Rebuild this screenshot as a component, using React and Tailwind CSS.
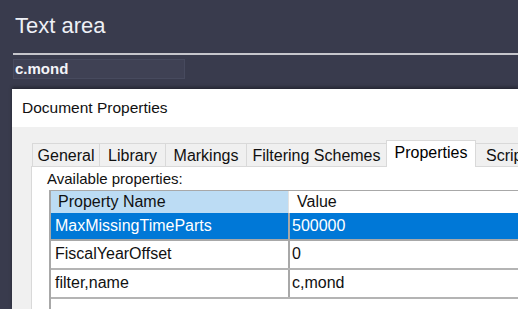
import React from "react";

const tabs = [
  { t: "General", w: "w-[67px]" },
  { t: "Library", w: "w-[66px]" },
  { t: "Markings", w: "w-[81px]" },
  { t: "Filtering Schemes", w: "w-[140px]" },
  { t: "Properties", w: "w-[90px]", sel: true },
  { t: "Scripts", w: "w-[70px]" },
];

const rows = [
  { name: "MaxMissingTimeParts", value: "500000", selected: true, h: "h-[28px]" },
  { name: "FiscalYearOffset", value: "0", h: "h-[29px]" },
  { name: "filter,name", value: "c,mond", h: "h-[29px]" },
];

export default function App() {
  return (
    <div className="flex flex-col w-[518px] h-[309px] overflow-hidden bg-[#393b4d] font-['Liberation_Sans',Arial,sans-serif]">
      <div className="pl-[15px] pt-[13px] text-[22px] leading-[26px] text-[#eef0f6]">Text area</div>
      <div className="ml-[13px] mt-[14px] h-[2px] bg-[#c6c6cc]" />
      <div className="ml-[13px] mt-[4px] w-[172px] h-[20px] bg-[#3f4154] border border-[#474a5e] pl-[1px] text-[15px] leading-[18px] font-semibold text-[#f4f4f8]">
        c.mond
      </div>
      <div className="ml-[12px] mt-[10px] flex-1 flex flex-col bg-white shadow-[0_-2px_3px_rgba(0,0,0,0.35)]">
        <div className="h-[38px] pl-[10px] text-[15.5px] leading-[38px] text-[#111]">Document Properties</div>
        <div className="flex-1 flex flex-col bg-[#f0f0f0] pt-[14px] pl-[19px]">
          <div className="relative z-10 ml-[1px] flex items-end h-[25px]">
            {tabs.map(({ t, w, sel }, i) => {
              if (sel) {
                return (
                  <div
                    key={t}
                    className={
                      w +
                      " shrink-0 -mb-[1px] h-[27px] flex justify-center bg-white border border-b-0 border-[#d9d9d9] text-[16px] leading-[23px] text-black whitespace-nowrap"
                    }
                  >
                    {t}
                  </div>
                );
              }
              return (
                <div
                  key={t}
                  className={
                    w +
                    " shrink-0 h-[23px] flex justify-center pt-[1px] bg-[#f0f0f0] border-t border-l border-[#d9d9d9] text-[16px] leading-[22px] text-[#111] whitespace-nowrap overflow-hidden" +
                    (i === tabs.length - 1 ? " border-r border-l-0" : "")
                  }
                >
                  {t}
                </div>
              );
            })}
          </div>
          <div className="flex-1 flex flex-col bg-white border-t border-l border-[#d9d9d9] pl-[15px] pt-[3px]">
            <div className="text-[15px] leading-[18px] text-[#111]">Available properties:</div>
            <div className="ml-[2px] mt-[2px] flex-1 flex flex-col border-l-2 border-t border-[#a8a8a8]">
              <div className="flex h-[22px] text-[16px] leading-[22px] text-[#111]">
                <div className="w-[237px] bg-[#bcdcf4] pl-[7px]">Property Name</div>
                <div className="flex-1 bg-white border-l border-[#e2e2e2] pl-[8px]">Value</div>
              </div>
              {rows.map((r) => (
                <div
                  key={r.name}
                  className={
                    r.h +
                    " flex border-b-2 text-[16px] leading-[26px] " +
                    (r.selected ? "bg-[#0078d7] text-white border-[#a8a8a8]" : "bg-white text-[#111] border-[#b4b4b4]")
                  }
                >
                  <div className="w-[237px] pl-[4px] whitespace-nowrap">{r.name}</div>
                  <div className="flex-1 border-l-2 border-[#a8a8a8] pl-[2px] whitespace-nowrap">{r.value}</div>
                </div>
              ))}
            </div>
          </div>
        </div>
      </div>
    </div>
  );
}
